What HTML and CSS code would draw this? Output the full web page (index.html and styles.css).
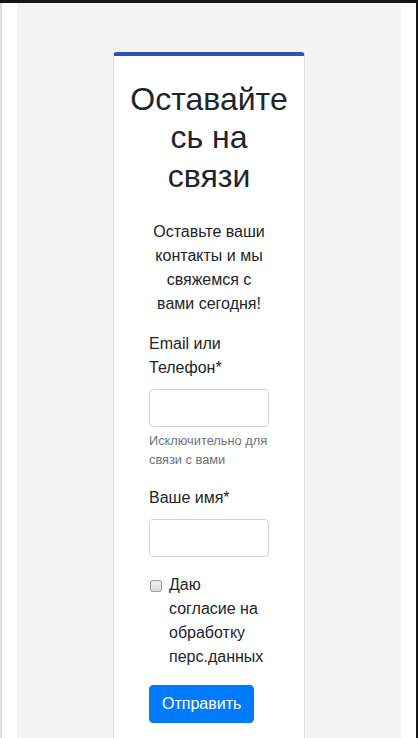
FILE: index.html
```html
<!DOCTYPE html>
<html lang="ru">
<head>
    <meta charset="UTF-8">
    <meta name="viewport" content="width=device-width, initial-scale=1.0">
    <title>Оставайтесь на связи</title>
    <link rel="stylesheet" href="styles.css">
</head>
<body>
    <div class="topbar"></div>
    <div class="frame">
        <div class="side-left"></div>

        <!-- Main area -->
        <div class="main">
            <div class="card">
                <h2 class="card-title">Оставайтесь на связи</h2>

                <form class="contact-form">
                    <p class="lead-text">Оставьте ваши контакты и мы свяжемся с вами сегодня!</p>

                    <div class="form-group">
                        <label for="contact">Email или Телефон*</label>
                        <input type="text" id="contact" class="form-input">
                        <small class="form-hint">Исключительно для связи с вами</small>
                    </div>

                    <div class="form-group">
                        <label for="name">Ваше имя*</label>
                        <input type="text" id="name" class="form-input">
                    </div>

                    <div class="form-group form-check">
                        <input type="checkbox" id="agree" class="check-input">
                        <label for="agree" class="check-label">Даю согласие на обработку перс.данных</label>
                    </div>

                    <button type="button" class="submit-button">Отправить</button>
                </form>
            </div>
        </div>

        <div class="side-right"></div>
        <div class="edge-right"></div>
    </div>
</body>
</html>
```

FILE: styles.css
```css
html, body {
    height: 100%;
}
body {
    margin: 0;
    display: flex;
    flex-direction: column;
    overflow: hidden;
    font-family: "Liberation Sans", Arial, sans-serif;
    font-size: 16px;
    line-height: 1.5;
    color: #212529;
    background-color: #fff;
}
.topbar {
    height: 3px;
    background-color: #14161b;
    flex-shrink: 0;
}
.frame {
    display: flex;
    flex: 1;
    min-height: 0;
}
.side-left {
    width: 15px;
    border-left: 2px solid #dedede;
    background-color: #fff;
}
.side-right {
    width: 15px;
    background-color: #fff;
}
.edge-right {
    width: 2px;
    background-color: #14161b;
}
.main {
    flex: 1;
    display: flex;
    justify-content: center;
    align-items: flex-start;
    padding-top: 49px;
    background-color: #f3f3f3;
}
.card {
    width: 190px;
    padding: 24px 0 60px;
    background-color: #fff;
    border: 1px solid #dcdcdc;
    border-top: 4px solid #2b53b1;
    border-radius: 4px 4px 0 0;
    text-align: center;
}
.card-title {
    margin: 0 15px 25px;
    font-size: 32px;
    font-weight: 400;
    line-height: 1.2;
    overflow-wrap: break-word;
}
.contact-form {
    padding: 0 35px;
    text-align: left;
}
.lead-text {
    margin: 0 0 16px;
    text-align: center;
}
.form-group {
    margin-bottom: 16px;
}
.form-group label {
    display: block;
    margin-bottom: 9px;
}
.form-input {
    display: block;
    box-sizing: border-box;
    width: 100%;
    height: 38px;
    padding: 6px 12px;
    font-size: 16px;
    border: 1px solid #ced4da;
    border-radius: 4px;
    background-color: #fff;
}
.form-hint {
    display: block;
    margin-top: 4px;
    font-size: 12.8px;
    color: #6c757d;
}
.form-check {
    display: flex;
    align-items: flex-start;
}
.check-input {
    appearance: none;
    -webkit-appearance: none;
    flex-shrink: 0;
    width: 12px;
    height: 12px;
    margin: 7px 7px 0 1px;
    border: 1px solid #9a9a9a;
    border-radius: 3px;
    background: linear-gradient(#f0f0f0, #dcdcdc);
}
.form-group .check-label {
    margin-bottom: 0;
}
.submit-button {
    padding: 6px 12px;
    font-family: inherit;
    font-size: 16px;
    line-height: 1.5;
    color: #fff;
    background-color: #007bff;
    border: 1px solid #007bff;
    border-radius: 4px;
    cursor: pointer;
}
```
